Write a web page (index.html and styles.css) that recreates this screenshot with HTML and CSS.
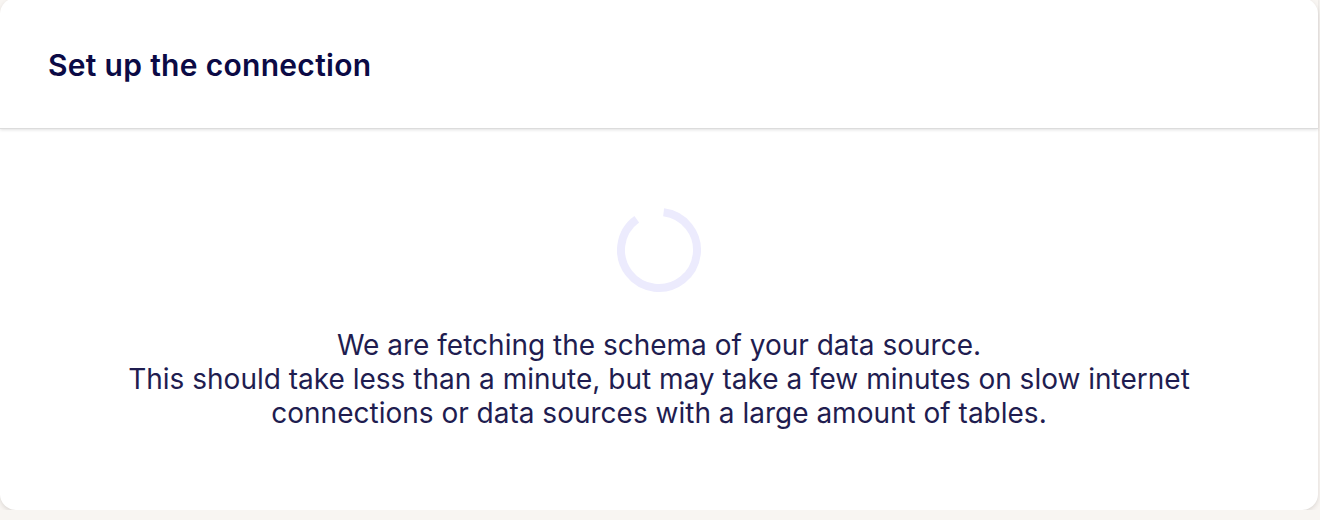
FILE: index.html
```html
<!DOCTYPE html>
<html lang="en">
<head>
  <meta charset="UTF-8" />
  <title>Set up the connection</title>
  <link rel="stylesheet" href="styles.css">
</head>
<body>

  <div class="card">
    <div class="card-header">
      <h2>Set up the connection</h2>
    </div>

    <div class="card-body">
      <svg class="spinner" width="88" height="88" viewBox="0 0 88 88">
        <circle cx="44" cy="44" r="38" fill="none" stroke="#ecebfd" stroke-width="8"
                stroke-dasharray="210 29" transform="rotate(-83 44 44)" />
      </svg>
      <p class="message">
        We are fetching the schema of your data source.<br>
        This should take less than a minute, but may take a few minutes on slow internet<br>
        connections or data sources with a large amount of tables.
      </p>
    </div>
  </div>

</body>
</html>
```

FILE: styles.css
```css
body {
  font-family: Inter, 'Noto Sans', sans-serif;
  background: #f8f5f2;
  margin: 0;
  padding: 0;
}

.card {
  margin: -2px 2px 0 0;
  height: 512px;
  background: #ffffff;
  border-radius: 16px;
  box-shadow: 0 2px 4px rgba(60, 50, 40, 0.14);
  display: flex;
  flex-direction: column;
}

.card-header {
  height: 131px;
  box-sizing: border-box;
  padding: 0 48px;
  display: flex;
  align-items: center;
  border-bottom: 1px solid #dcdcdc;
  box-shadow: 0 1px 3px rgba(0, 0, 0, 0.12);
  position: relative;
}

.card-header h2 {
  margin: 0;
  padding-top: 3px;
  font-size: 30px;
  font-weight: 600;
  letter-spacing: 0.3px;
  color: #0b0a45;
}

.card-body {
  display: flex;
  flex-direction: column;
  align-items: center;
  padding-top: 77px;
}

.spinner {
  display: block;
}

.message {
  margin: 34px 0 0;
  text-align: center;
  font-size: 28px;
  line-height: 34px;
  color: #1f1d50;
}
```
